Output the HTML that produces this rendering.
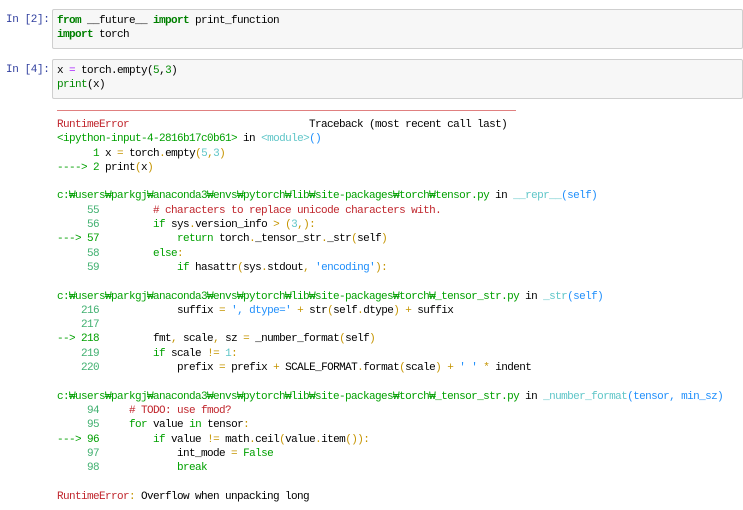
<!DOCTYPE html>
<html><head><meta charset="utf-8"><style>
body{margin:0;width:743px;height:510px;background:#fff;overflow:hidden;position:relative;font-family:"Liberation Mono","Noto Sans CJK KR",monospace;}
pre{margin:0;font-family:inherit;font-size:11px;letter-spacing:-0.6px;line-height:14.3px;position:absolute;color:#000;white-space:pre;}
.p{position:absolute;left:6px;font-size:11px;letter-spacing:-0.4px;color:#303F9F;font-family:"Liberation Mono",monospace;}
.box{position:absolute;left:52px;right:0;background:#f7f7f7;border:1px solid #cfcfcf;border-radius:2px;}
.k{color:#008000;font-weight:bold}.o{color:#aa22ff}.n{color:#080}
.g{color:#00a000}.lg{color:#40b070}.r{color:#c0262d}.c{color:#60c6c8}.b{color:#208ffb}.y{color:#c59400}
</style></head><body>
<div class="p" style="top:14px">In [2]:</div>
<div class="box" style="top:9px;height:38px"></div>
<pre style="left:57px;top:14px"><span class="k">from</span> __future__ <span class="k">import</span> print_function
<span class="k">import</span> torch</pre>
<div class="p" style="top:64px">In [4]:</div>
<div class="box" style="top:59px;height:38px"></div>
<pre style="left:57px;top:64px">x <span class="o">=</span> torch.empty(<span class="n">5</span>,<span class="n">3</span>)
<span class="n">print</span>(x)</pre>
<div style="position:absolute;left:57px;top:110px;width:459px;height:1px;background:#e08080"></div>
<pre style="left:57px;top:118px"><span class="r">RuntimeError</span>                              Traceback (most recent call last)
<span class="g">&lt;ipython-input-4-2816b17c0b61&gt;</span> in <span class="c">&lt;module&gt;</span><span class="b">()</span>
<span class="g">      1</span> x <span class="y">=</span> torch<span class="y">.</span>empty<span class="y">(</span><span class="c">5</span><span class="y">,</span><span class="c">3</span><span class="y">)</span>
<span class="g">----&gt; 2</span> print<span class="y">(</span>x<span class="y">)</span>

<span class="g">c:₩users₩parkgj₩anaconda3₩envs₩pytorch₩lib₩site-packages₩torch₩tensor.py</span> in <span class="c">__repr__</span><span class="b">(self)</span>
<span class="lg">     55</span>         <span class="r"># characters to replace unicode characters with.</span>
<span class="lg">     56</span>         <span class="g">if</span> sys<span class="y">.</span>version_info <span class="y">&gt;</span> <span class="y">(</span><span class="c">3</span><span class="y">,):</span>
<span class="g">---&gt; 57</span>             <span class="g">return</span> torch<span class="y">.</span>_tensor_str<span class="y">.</span>_str<span class="y">(</span>self<span class="y">)</span>
<span class="lg">     58</span>         <span class="g">else</span><span class="y">:</span>
<span class="lg">     59</span>             <span class="g">if</span> hasattr<span class="y">(</span>sys<span class="y">.</span>stdout<span class="y">,</span> <span class="b">'encoding'</span><span class="y">):</span>

<span class="g">c:₩users₩parkgj₩anaconda3₩envs₩pytorch₩lib₩site-packages₩torch₩_tensor_str.py</span> in <span class="c">_str</span><span class="b">(self)</span>
<span class="lg">    216</span>             suffix <span class="y">=</span> <span class="b">', dtype='</span> <span class="y">+</span> str<span class="y">(</span>self<span class="y">.</span>dtype<span class="y">)</span> <span class="y">+</span> suffix
<span class="lg">    217</span>
<span class="g">--&gt; 218</span>         fmt<span class="y">,</span> scale<span class="y">,</span> sz <span class="y">=</span> _number_format<span class="y">(</span>self<span class="y">)</span>
<span class="lg">    219</span>         <span class="g">if</span> scale <span class="y">!=</span> <span class="c">1</span><span class="y">:</span>
<span class="lg">    220</span>             prefix <span class="y">=</span> prefix <span class="y">+</span> SCALE_FORMAT<span class="y">.</span>format<span class="y">(</span>scale<span class="y">)</span> <span class="y">+</span> <span class="b">' '</span> <span class="y">*</span> indent

<span class="g">c:₩users₩parkgj₩anaconda3₩envs₩pytorch₩lib₩site-packages₩torch₩_tensor_str.py</span> in <span class="c">_number_format</span><span class="b">(tensor, min_sz)</span>
<span class="lg">     94</span>     <span class="r"># TODO: use fmod?</span>
<span class="lg">     95</span>     <span class="g">for</span> value <span class="g">in</span> tensor<span class="y">:</span>
<span class="g">---&gt; 96</span>         <span class="g">if</span> value <span class="y">!=</span> math<span class="y">.</span>ceil<span class="y">(</span>value<span class="y">.</span>item<span class="y">()):</span>
<span class="lg">     97</span>             int_mode <span class="y">=</span> <span class="g">False</span>
<span class="lg">     98</span>             <span class="g">break</span>

<span class="r">RuntimeError</span><span class="y">:</span> Overflow when unpacking long</pre>
</body></html>
